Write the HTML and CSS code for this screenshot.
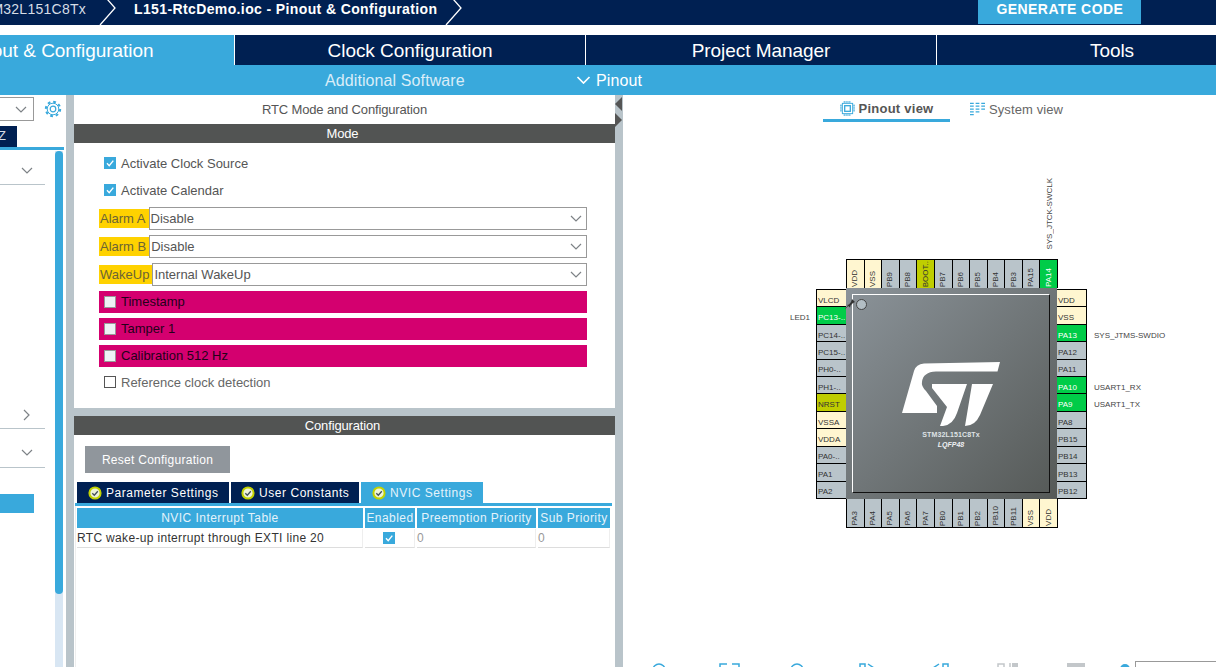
FILE: index.html
```html
<!DOCTYPE html>
<html lang="en">
<head>
<meta charset="utf-8">
<title>L151-RtcDemo.ioc - Pinout &amp; Configuration</title>
<link rel="stylesheet" href="styles.css">
</head>
<body>
<svg class="defs" width="0" height="0">
  <symbol id="down" viewBox="0 0 12 7"><path d="M1 1l5 5 5-5" fill="none" stroke="#7d8286" stroke-width="1.2"/></symbol>
  <symbol id="tick" viewBox="0 0 12 12"><rect width="12" height="12" fill="#39a9dc"/><path d="M3 6.3l2.2 2.4L9.3 3.6" fill="none" stroke="#fff" stroke-width="1.4"/></symbol>
  <symbol id="ok" viewBox="0 0 14 14"><circle cx="7" cy="7" r="5.6" fill="#eef3d8" stroke="#c3d200" stroke-width="2"/><path d="M4.3 7.2l2 2 3.5-4" fill="none" stroke="#44505a" stroke-width="1.3"/></symbol>
</svg>
<div class="page">
  <header class="topbar">
    <div class="crumb crumb-first">STM32L151C8Tx</div>
    <svg class="crumb-arrow" viewBox="0 0 18 25"><path d="M1 25L16 8 1-9" fill="none" stroke="#fff" stroke-width="1.3"/></svg>
    <div class="crumb crumb-current">L151-RtcDemo.ioc - Pinout &amp; Configuration</div>
    <svg class="crumb-arrow crumb-arrow-last" viewBox="0 0 18 25"><path d="M1 25L16 8 1-9" fill="none" stroke="#fff" stroke-width="1.3"/></svg>
    <button class="generate">GENERATE CODE</button>
  </header>

  <nav class="tabs">
    <div class="tab tab-active">Pinout &amp; Configuration</div>
    <div class="tab">Clock Configuration</div>
    <div class="tab">Project Manager</div>
    <div class="tab">Tools</div>
  </nav>
  <div class="subtabs">
    <span class="sub-software">Additional Software</span>
    <svg class="sub-chevron" viewBox="0 0 14 8"><path d="M1 1l6 6 6-6" fill="none" stroke="#fff" stroke-width="1.7"/></svg>
    <span class="sub-pinout">Pinout</span>
  </div>

  <main class="workspace">
    <aside class="side">
      <div class="side-top">
        <div class="side-select"><svg class="chev"><use href="#down"/></svg></div>
        <svg class="gear" viewBox="0 0 18 18">
          <circle cx="9" cy="9" r="7.2" fill="none" stroke="#39a9dc" stroke-width="2" stroke-dasharray="2.8 2.85"/>
          <circle cx="9" cy="9" r="5.8" fill="none" stroke="#39a9dc" stroke-width="1"/>
          <circle cx="9" cy="9" r="2.8" fill="none" stroke="#39a9dc" stroke-width="1.2"/>
        </svg>
      </div>
      <div class="side-sort"><span class="sort-z">Z</span></div>
      <div class="side-body">
        <div class="side-list">
          <div class="cat cat-1"><svg class="chev"><use href="#down"/></svg></div>
          <div class="cat cat-2"><svg class="chev-r" viewBox="0 0 7 12"><path d="M1 1l5 5-5 5" fill="none" stroke="#7d8286" stroke-width="1.2"/></svg></div>
          <div class="cat cat-3"><svg class="chev"><use href="#down"/></svg></div>
          <div class="side-active"></div>
        </div>
        <div class="scroll"><div class="scroll-thumb"></div></div>
      </div>
    </aside>
    <div class="sash"></div>

    <section class="middle">
      <div class="mode-panel">
        <div class="panel-title">RTC Mode and Configuration</div>
        <div class="bar">Mode</div>
        <div class="mode-body">
          <label class="check-row first"><svg class="tick"><use href="#tick"/></svg>Activate Clock Source</label>
          <label class="check-row"><svg class="tick"><use href="#tick"/></svg>Activate Calendar</label>
          <div class="field"><span class="field-label">Alarm A</span><div class="select">Disable<svg class="chev"><use href="#down"/></svg></div></div>
          <div class="field"><span class="field-label">Alarm B</span><div class="select">Disable<svg class="chev"><use href="#down"/></svg></div></div>
          <div class="field"><span class="field-label">WakeUp</span><div class="select">Internal WakeUp<svg class="chev"><use href="#down"/></svg></div></div>
          <div class="warn warn-first"><span class="box"></span><span class="warn-text">Timestamp</span></div>
          <div class="warn warn-next"><span class="box"></span><span class="warn-text">Tamper 1</span></div>
          <div class="warn warn-next"><span class="box"></span><span class="warn-text">Calibration 512 Hz</span></div>
          <div class="plain-check"><span class="box box-plain"></span>Reference clock detection</div>
        </div>
      </div>
      <div class="hsash"></div>
      <div class="config-panel">
        <div class="bar">Configuration</div>
        <button class="reset">Reset Configuration</button>
        <div class="cfg-tabs">
          <div class="cfg-tab t1"><svg class="ok"><use href="#ok"/></svg>Parameter Settings</div>
          <div class="cfg-tab t2"><svg class="ok"><use href="#ok"/></svg>User Constants</div>
          <div class="cfg-tab t3 cfg-active"><svg class="ok"><use href="#ok"/></svg>NVIC Settings</div>
        </div>
        <div class="table-wrap">
          <table class="nvic">
            <thead><tr><th class="c1">NVIC Interrupt Table</th><th class="c2">Enabled</th><th class="c3">Preemption Priority</th><th class="c4">Sub Priority</th></tr></thead>
            <tbody><tr><td class="name">RTC wake-up interrupt through EXTI line 20</td><td class="mid"><svg class="tick"><use href="#tick"/></svg></td><td class="num">0</td><td class="num">0</td></tr></tbody>
          </table>
        </div>
      </div>
    </section>
    <div class="sash sash-arrows">
      <i class="arrow-l"></i><i class="arrow-r"></i>
    </div>

    <section class="pinout">
      <div class="view-tabs">
        <div class="view view-on">
          <svg class="view-icon" viewBox="0 0 16 16"><g fill="none" stroke="#39a9dc"><rect x="2.5" y="2.5" width="11" height="11"/><rect x="5" y="5" width="6" height="6" stroke-width="1.4"/><path d="M0 4.5h2M0 6.5h2M0 8.5h2M0 10.5h2M14 4.5h2M14 6.5h2M14 8.5h2M14 10.5h2M4.5 0v2M6.5 0v2M8.5 0v2M10.5 0v2M4.5 14v2M6.5 14v2M8.5 14v2M10.5 14v2"/></g></svg>
          <span>Pinout view</span>
        </div>
        <div class="view">
          <svg class="view-icon" viewBox="0 0 16 16"><path d="M0 1.5h4M6 1.5h4M12 1.5h4M0 4.5h4M6 4.5h4M12 4.5h4M0 7.5h4M6 7.5h4M12 7.5h4M0 10.5h4M6 10.5h4M0 13.5h4" fill="none" stroke="#39a9dc" stroke-width="1.3"/></svg>
          <span>System view</span>
        </div>
      </div>
      <div class="canvas">
        <div class="mcu">
          <div class="pins pins-top">
            <div class="pin yel"><b>VDD</b></div><div class="pin yel"><b>VSS</b></div><div class="pin"><b>PB9</b></div><div class="pin"><b>PB8</b></div><div class="pin oli"><b>BOOT..</b></div><div class="pin"><b>PB7</b></div><div class="pin"><b>PB6</b></div><div class="pin"><b>PB5</b></div><div class="pin"><b>PB4</b></div><div class="pin"><b>PB3</b></div><div class="pin"><b>PA15</b></div><div class="pin grn"><b>PA14</b><span class="signal signal-top">SYS_JTCK-SWCLK</span></div>
          </div>
          <div class="pins pins-left">
            <div class="pin yel"><b>VLCD</b></div><div class="pin grn"><b>PC13-..</b><span class="signal signal-left">LED1</span></div><div class="pin"><b>PC14-..</b></div><div class="pin"><b>PC15-..</b></div><div class="pin"><b>PH0-..</b></div><div class="pin"><b>PH1-..</b></div><div class="pin oli"><b>NRST</b></div><div class="pin yel"><b>VSSA</b></div><div class="pin yel"><b>VDDA</b></div><div class="pin"><b>PA0-..</b></div><div class="pin"><b>PA1</b></div><div class="pin"><b>PA2</b></div>
          </div>
          <div class="chip">
            <div class="chip-inner">
              <span class="dot"></span>
              <svg class="pushpin" viewBox="0 0 12 12"><path d="M8 1l3 3-2 1-2.5 2.5-.5 2L3 7l2-.5L7 4z" fill="#333"/><path d="M4 8l-3 3" stroke="#555"/></svg>
              <svg class="st-logo" viewBox="0 0 98 64"><path fill="#fff" d="M0 51L12 9Q14 2 22 1.500L98 0l-2.500 9.500L34 9.500Q21 10 20 20Q19 24 24 29L35 44V51ZM30 22H65L55 51Q51 63 41 64H38L45 45L30 26ZM70 22H91L78 53Q73 64 63 64Z"/></svg>
              <div class="chip-name">STM32L151C8Tx</div>
              <div class="chip-pkg">LQFP48</div>
            </div>
          </div>
          <div class="pins pins-right">
            <div class="pin yel"><b>VDD</b></div><div class="pin yel"><b>VSS</b></div><div class="pin grn"><b>PA13</b><span class="signal signal-right">SYS_JTMS-SWDIO</span></div><div class="pin"><b>PA12</b></div><div class="pin"><b>PA11</b></div><div class="pin grn"><b>PA10</b><span class="signal signal-right">USART1_RX</span></div><div class="pin grn"><b>PA9</b><span class="signal signal-right">USART1_TX</span></div><div class="pin"><b>PA8</b></div><div class="pin"><b>PB15</b></div><div class="pin"><b>PB14</b></div><div class="pin"><b>PB13</b></div><div class="pin"><b>PB12</b></div>
          </div>
          <div class="pins pins-bottom">
            <div class="pin"><b>PA3</b></div><div class="pin"><b>PA4</b></div><div class="pin"><b>PA5</b></div><div class="pin"><b>PA6</b></div><div class="pin"><b>PA7</b></div><div class="pin"><b>PB0</b></div><div class="pin"><b>PB1</b></div><div class="pin"><b>PB2</b></div><div class="pin"><b>PB10</b></div><div class="pin"><b>PB11</b></div><div class="pin yel"><b>VSS</b></div><div class="pin yel"><b>VDD</b></div>
          </div>
        </div>
      </div>
      <div class="tools">
        <svg class="tool t-a" viewBox="0 0 14 14"><circle cx="7" cy="7" r="6" fill="none" stroke="#39a9dc" stroke-width="1.5"/></svg>
        <svg class="tool t-b" viewBox="0 0 21 14"><path d="M1 5V1h7M13 1h7v4" fill="none" stroke="#39a9dc" stroke-width="1.5"/></svg>
        <svg class="tool t-c" viewBox="0 0 14 14"><circle cx="7" cy="7" r="6" fill="none" stroke="#39a9dc" stroke-width="1.5"/></svg>
        <svg class="tool t-d" viewBox="0 0 16 14"><path d="M1 8V1h5v7M9 1l6 4" fill="none" stroke="#39a9dc" stroke-width="1.5"/></svg>
        <svg class="tool t-e" viewBox="0 0 17 14"><path d="M1 5l6-4M11 8V1h5v7" fill="none" stroke="#39a9dc" stroke-width="1.5"/></svg>
        <svg class="tool t-f" viewBox="0 0 21 14"><path d="M1 7V1h6v6M13 0v7" fill="none" stroke="#c3c7ca" stroke-width="1.5"/><rect x="15" y="0" width="6" height="8" fill="#c3c7ca"/></svg>
        <svg class="tool t-g" viewBox="0 0 18 14"><rect width="18" height="14" fill="#c3c7ca"/></svg>
        <svg class="tool t-h" viewBox="0 0 10 14"><circle cx="5" cy="6" r="5" fill="#39a9dc"/></svg>
        <div class="tool-input"></div>
      </div>
    </section>
  </main>
</div>
</body>
</html>
```
FILE: styles.css
```css
* { box-sizing: border-box; }
html, body { margin: 0; height: 100%; overflow: hidden; background: #fff; }
body { font-family: "Liberation Sans", Arial, sans-serif; color: #555; }
.defs { position: absolute; }
.page { width: 1216px; height: 667px; display: flex; flex-direction: column; overflow: hidden; }

/* top bar */
.topbar { height: 25px; flex: none; background: #002052; display: flex; align-items: flex-start; color: #fff; }
.crumb { font-size: 14px; line-height: 18px; white-space: nowrap; flex: none; }
.crumb-first { margin-left: -27px; width: 126px; color: #d6dde6; letter-spacing: .25px; }
.crumb-current { font-weight: 700; margin-left: 17px; letter-spacing: .38px; }
.crumb-arrow { width: 18px; height: 25px; flex: none; }
.crumb-arrow-last { margin-left: 8px; }
.generate { margin-left: 515px; width: 163px; height: 24px; flex: none; border: 0; padding: 0 0 6px; background: #39a9dc; color: #fff; font: 700 14px "Liberation Sans", Arial, sans-serif; letter-spacing: .45px; }

/* main tabs */
.tabs { flex: none; display: flex; height: 30px; margin: 10px 0 0 -116px; }
.tab { flex: none; width: 351px; background: #002052; color: #fff; font-size: 19px; line-height: 31px; letter-spacing: -.05px; text-align: center; border-right: 1px solid #fff; }
.tab-active { background: #39a9dc; }
.subtabs { flex: none; height: 30px; background: #39a9dc; display: flex; align-items: center; padding: 1px 0 0 325px; font-size: 16px; color: #fff; }
.sub-software { color: #d9edf8; width: 251px; letter-spacing: .1px; white-space: nowrap; }
.sub-chevron { width: 15px; height: 8px; margin-top: -1px; }
.sub-pinout { margin-left: 5px; letter-spacing: .1px; }

/* workspace */
.workspace { flex: 1; min-height: 0; display: flex; }
.side { width: 66px; flex: none; display: flex; flex-direction: column; }
.side-top { height: 31px; padding-top: 2px; display: flex; align-items: flex-start; }
.side-select { width: 34px; height: 24px; border: 1px solid #999; border-left: 0; display: flex; align-items: center; justify-content: flex-end; padding-right: 6px; }
.chev { width: 12px; height: 7px; display: block; flex: none; }
.gear { width: 18px; height: 18px; margin: 3px 0 0 10px; }
.side-sort { height: 24px; border-bottom: 3px solid #39a9dc; margin-right: 2px; }
.sort-z { display: block; width: 17px; height: 21px; background: #002052; color: #d6dde6; font-size: 13px; line-height: 20px; text-indent: -2px; overflow: hidden; }
.side-body { flex: 1; min-height: 0; display: flex; padding-top: 1px; }
.side-list { width: 55px; display: flex; flex-direction: column; }
.cat { width: 45px; border-bottom: 1px solid #b9c4ca; display: flex; align-items: center; justify-content: flex-end; padding-right: 12px; }
.cat-1 { height: 34px; padding-top: 5px; }
.cat-2 { height: 39px; margin-top: 205px; padding: 11px 15px 0 0; }
.cat-3 { height: 39px; padding-top: 8px; }
.chev-r { width: 7px; height: 12px; }
.side-active { width: 34px; height: 19px; background: #39a9dc; margin-top: 26px; }
.scroll { width: 8px; background: #d8e6f3; }
.scroll-thumb { height: 443px; background: #39a9dc; border-radius: 4px; }
.sash { width: 8px; flex: none; background: #b9c4ca; }
.sash-arrows { display: flex; flex-direction: column; padding-top: 2px; gap: 2px; }
.arrow-l, .arrow-r { display: block; width: 0; height: 0; border-top: 7px solid transparent; border-bottom: 7px solid transparent; }
.arrow-l { border-right: 7px solid #555; }
.arrow-r { border-left: 7px solid #555; }

/* middle */
.middle { width: 541px; flex: none; display: flex; flex-direction: column; }
.mode-panel { height: 313px; flex: none; }
.panel-title { height: 29px; font-size: 13px; line-height: 29px; text-align: center; color: #555; letter-spacing: -.15px; }
.bar { height: 19px; background: #525453; color: #fff; font-size: 13px; line-height: 19px; text-align: center; letter-spacing: -.15px; padding-right: 4px; }
.mode-body { padding: 0 28px 0 25px; font-size: 13px; }
.check-row { display: flex; align-items: center; gap: 5px; height: 20px; margin: 7px 0 0 5px; color: #555; }
.check-row.first { margin-top: 10px; }
.tick { width: 12px; height: 12px; flex: none; display: block; }
.field { display: flex; align-items: center; height: 23px; margin-top: 5px; }
.check-row + .field { margin-top: 7px; }
.field-label { background: #ffd200; height: 19px; line-height: 19px; color: #6b6436; white-space: nowrap; padding: 0 3px 0 1px; }
.select { flex: 1; height: 23px; border: 1px solid #999; display: flex; align-items: center; justify-content: space-between; padding: 0 4px 0 1px; color: #555; }
.warn { height: 22px; background: #d4006f; color: #24001a; display: flex; align-items: center; gap: 5px; padding-left: 5px; }
.warn-text { position: relative; top: -1px; }
.warn-first { margin-top: 5px; }
.warn-next { margin-top: 5px; }
.box { width: 12px; height: 12px; background: #eef2f5; border: 1px solid #999; flex: none; }
.box-plain { background: #fff; border-color: #555; }
.plain-check { display: flex; align-items: center; gap: 5px; height: 20px; margin: 5px 0 0 5px; color: #666; }
.hsash { height: 8px; flex: none; background: #b9c4ca; }
.config-panel { flex: 1; min-height: 0; display: flex; flex-direction: column; }
.reset { width: 145px; height: 27px; margin: 11px 0 0 11px; border: 0; background: #90969c; color: #fff; font: 12px "Liberation Sans", Arial, sans-serif; letter-spacing: .27px; }
.cfg-tabs { display: flex; gap: 2px; margin: 9px 3px 0 1px; padding: 0 0 0 2px; border-bottom: 3px solid #39a9dc; }
.cfg-tab { height: 21px; background: #002052; color: #fff; display: flex; align-items: center; gap: 4px; font-size: 12px; letter-spacing: .55px; white-space: nowrap; padding-left: 11px; }
.t1 { width: 152px; }
.t2 { width: 128px; padding-left: 10px; }
.t3 { width: 122px; }
.cfg-active { background: #39a9dc; color: #e4f3fb; }
.ok { width: 14px; height: 14px; flex: none; }
.table-wrap { flex: 1; margin: 0 3px 0 1px; border-left: 1px solid #eee; padding-top: 2px; }
.nvic { width: 536px; table-layout: fixed; border-collapse: separate; border-spacing: 2px 1px; margin: -1px 0 0 -1px; font-size: 12px; }
.nvic th { height: 20px; padding: 0; background: #39a9dc; color: #e4f3fb; font-weight: 400; letter-spacing: .45px; white-space: nowrap; }
.c1 { width: 286px; } .c2 { width: 50px; } .c3 { width: 119px; } .c4 { width: 72px; }
.nvic td { height: 19px; padding: 0; border-bottom: 1px solid #ddd; border-right: 1px solid #eee; }
.name { font-size: 12px; color: #333; white-space: nowrap; letter-spacing: .33px; }
.mid .tick { margin: 0 auto; position: relative; left: -1px; }
.num { color: #999; }

/* pinout */
.pinout { flex: 1; min-width: 0; display: flex; flex-direction: column; }
.view-tabs { height: 27px; flex: none; display: flex; padding-left: 200px; }
.view { display: flex; align-items: center; gap: 4px; height: 27px; font-size: 13px; color: #666; margin-left: 20px; letter-spacing: .1px; padding: 5px 0 3px; }
.view-on { width: 127px; margin-left: 0; justify-content: center; font-weight: 700; color: #555; letter-spacing: .25px; border-bottom: 3px solid #39a9dc; }
.view-icon { width: 15px; height: 15px; flex: none; }
.canvas { flex: 1; min-height: 0; padding: 137px 0 0 193px; }
.mcu { display: grid; grid-template-columns: 30px 211px 30px; grid-template-rows: 29px 211px 29px; width: 271px; }
.pins { display: grid; gap: 1px; background: #000; }
.pins-top, .pins-bottom { grid-template-columns: repeat(12, 1fr); grid-column: 2; margin: 0 -1px 0 0; }
.pins-top { grid-row: 1; padding: 1px 1px 0; }
.pins-bottom { grid-row: 3; padding: 0 1px 1px; }
.pins-left, .pins-right { grid-template-rows: repeat(12, 1fr); grid-row: 2; margin: 1px 0 0; }
.pins-left { grid-column: 1; padding: 1px 0 1px 1px; }
.pins-right { grid-column: 3; padding: 1px 1px 1px 0; }
.pin { position: relative; background: #b9c4ca; color: #333; font-size: 8px; line-height: 1; display: flex; min-width: 0; min-height: 0; }
.pin b { font-weight: 400; white-space: nowrap; }
.pins-left .pin, .pins-right .pin { align-items: center; padding: 5px 0 0 1px; }
.pins-top .pin, .pins-bottom .pin { justify-content: center; align-items: flex-end; padding-bottom: 1px; }
.pins-top .pin b, .pins-bottom .pin b { writing-mode: vertical-rl; transform: rotate(180deg); }
.yel { background: #fff6d0; }
.grn { background: #00cc48; color: #fff; }
.oli { background: #bfcd00; }
.signal { position: absolute; color: #444; font-size: 8px; white-space: nowrap; }
.signal-right { left: calc(100% + 8px); top: 7px; }
.signal-left { right: calc(100% + 7px); top: 7px; }
.signal-top { bottom: calc(100% + 10px); left: 6px; writing-mode: vertical-rl; transform: rotate(180deg); }
.chip { grid-column: 2; grid-row: 2; padding: 6px 7px 6px 6px; background: linear-gradient(135deg, #8b9399, #555957); }
.chip-inner { position: relative; height: 100%; display: flex; flex-direction: column; align-items: center; padding-top: 67px; border: 1px solid; border-color: #fff #111 #111 #fff; }
.dot { position: absolute; left: 3px; top: 4px; width: 11px; height: 11px; border-radius: 50%; background: #b3bec4; border: 1px solid #444; }
.pushpin { position: absolute; left: -9px; top: 3px; width: 12px; height: 12px; }
.st-logo { width: 98px; height: 64px; flex: none; }
.chip-name { color: #dfe3e6; font-size: 7px; font-weight: 700; margin-top: 5px; letter-spacing: .15px; }
.chip-pkg { color: #eef0f2; font-size: 7px; font-weight: 700; font-style: italic; margin-top: 3px; }
.tools { height: 6px; flex: none; display: flex; align-items: flex-start; overflow: hidden; padding-left: 29px; }
.tool { flex: none; height: 14px; margin-top: 2px; }
.t-a { width: 14px; }
.t-b { width: 21px; margin-left: 53px; }
.t-c { width: 14px; margin-left: 50px; }
.t-d { width: 16px; margin-left: 55px; }
.t-e { width: 17px; margin-left: 57px; }
.t-f { width: 21px; margin-left: 48px; }
.t-g { width: 18px; margin-left: 49px; }
.t-h { width: 10px; margin-left: 35px; }
.tool-input { width: 90px; height: 20px; margin-left: 5px; border: 1px solid #999; flex: none; }
```
